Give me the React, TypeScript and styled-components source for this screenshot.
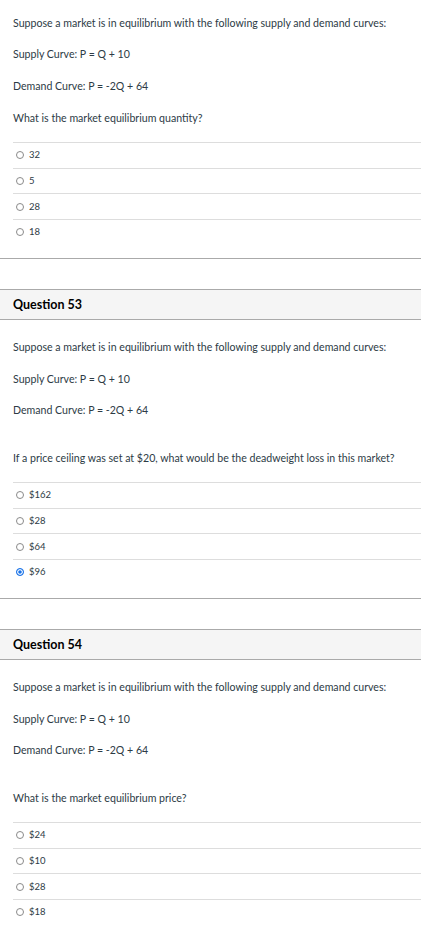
import styled, {createGlobalStyle} from 'styled-components';

const GlobalStyle = createGlobalStyle`
  html, body {
    margin: 0;
    padding: 0;
    background: #ffffff;
  }
  body {
    font-family: Lato, 'Open Sans', 'Liberation Sans', sans-serif;
    color: #2d3b45;
    -webkit-font-smoothing: antialiased;
  }
`;

type Question = {
  title?: string;
  prompt: string[];
  ask: string;
  answers: string[];
  selected?: number;
};

const questions: Question[] = [
  {
    prompt: [
      'Suppose a market is in equilibrium with the following supply and demand curves:',
      'Supply Curve: P = Q + 10',
      'Demand Curve: P = -2Q + 64',
    ],
    ask: 'What is the market equilibrium quantity?',
    answers: ['32', '5', '28', '18'],
  },
  {
    title: 'Question 53',
    prompt: [
      'Suppose a market is in equilibrium with the following supply and demand curves:',
      'Supply Curve: P = Q + 10',
      'Demand Curve: P = -2Q + 64',
      '',
    ],
    ask: 'If a price ceiling was set at $20, what would be the deadweight loss in this market?',
    answers: ['$162', '$28', '$64', '$96'],
    selected: 3,
  },
  {
    title: 'Question 54',
    prompt: [
      'Suppose a market is in equilibrium with the following supply and demand curves:',
      'Supply Curve: P = Q + 10',
      'Demand Curve: P = -2Q + 64',
      '',
    ],
    ask: 'What is the market equilibrium price?',
    answers: ['$24', '$10', '$28', '$18'],
  },
];

export default function App() {
  return (
    <>
      <GlobalStyle />
      <Page>
        {questions.map((q, i) => (
          <QuestionBlock key={i} $first={i === 0}>
            {q.title && <Header>{q.title}</Header>}
            <Body $first={i === 0}>
              {q.prompt.map((line, j) =>
                line ? <Para key={j}>{line}</Para> : <Blank key={j} />
              )}
              <Para>{q.ask}</Para>
            </Body>
            <Answers>
              {q.answers.map((a, j) => (
                <AnswerRow key={a + j}>
                  <Radio $checked={q.selected === j} />
                  <AnswerText>{a}</AnswerText>
                </AnswerRow>
              ))}
            </Answers>
          </QuestionBlock>
        ))}
      </Page>
    </>
  );
}

const Page = styled.div`
  display: flex;
  flex-direction: column;
  width: 421px;
  overflow: hidden;
`;

const QuestionBlock = styled.section<{$first?: boolean}>`
  display: flex;
  flex-direction: column;
  margin-top: ${(p) => (p.$first ? '0' : '30px')};
  padding-bottom: 13px;
  border-bottom: 1px solid #aaaaaa;
`;

const Header = styled.h2`
  margin: 0;
  height: 29px;
  display: flex;
  align-items: center;
  padding: 0 13px;
  background: #f5f5f5;
  border-top: 1px solid #aaaaaa;
  border-bottom: 1px solid #aaaaaa;
  font-size: 12.5px;
  font-weight: 700;
  color: #000000;
`;

const Body = styled.div<{$first?: boolean}>`
  display: flex;
  flex-direction: column;
  gap: 15.7px;
  padding: ${(p) => (p.$first ? '14.5px' : '19px')} 13px 16.5px;
`;

const Para = styled.p`
  margin: 0;
  font-size: 10.6px;
  line-height: 16px;
  white-space: nowrap;
`;

const Blank = styled.div`
  height: 0;
`;

const Answers = styled.div`
  display: flex;
  flex-direction: column;
  margin-left: 13px;
`;

const AnswerRow = styled.label`
  display: flex;
  align-items: center;
  gap: 5px;
  height: 24.7px;
  padding-left: 3px;
  border-top: 1px solid #dddddd;
`;

const Radio = styled.span<{$checked?: boolean}>`
  box-sizing: border-box;
  width: 8px;
  height: 8px;
  border-radius: 50%;
  border: 1px solid ${(p) => (p.$checked ? '#1a73e8' : '#8a8a8a')};
  background: ${(p) => (p.$checked ? '#1a73e8' : '#ffffff')};
  box-shadow: ${(p) => (p.$checked ? 'inset 0 0 0 1.2px #ffffff' : 'none')};
  flex-shrink: 0;
`;

const AnswerText = styled.span`
  font-size: 9.5px;
  line-height: 12px;
  color: #2d3b45;
`;
